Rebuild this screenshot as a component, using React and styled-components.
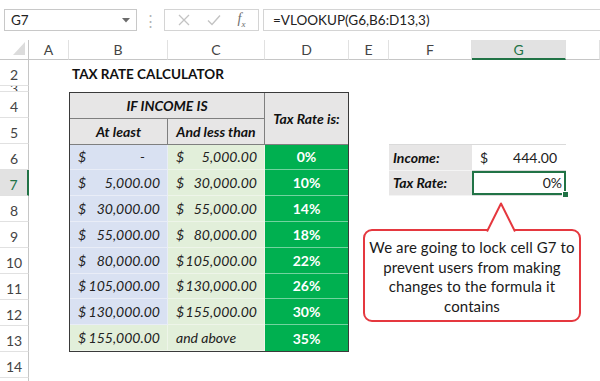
import React from 'react'
import styled, { createGlobalStyle } from 'styled-components'

const GlobalStyle = createGlobalStyle`
  body {
    margin: 0;
    background: #fff;
    font-family: Lato, "Liberation Sans", sans-serif;
    color: #222;
  }
  #root {
    width: 600px;
    height: 381px;
    overflow: hidden;
  }
`

const columns = ['A', 'B', 'C', 'D', 'E', 'F', 'G', '']
const rowLabels = [2, 3, 4, 5, 6, 7, 8, 9, 10, 11, 12, 13, 14, '']

const brackets = [
    { from: null, to: '5,000.00', rate: '0%' },
    { from: '5,000.00', to: '30,000.00', rate: '10%' },
    { from: '30,000.00', to: '55,000.00', rate: '14%' },
    { from: '55,000.00', to: '80,000.00', rate: '18%' },
    { from: '80,000.00', to: '105,000.00', rate: '22%' },
    { from: '105,000.00', to: '130,000.00', rate: '26%' },
    { from: '130,000.00', to: '155,000.00', rate: '30%' },
    { from: '155,000.00', to: null, rate: '35%' },
]

function FormulaIcons() {
    return (
        <ButtonGroup>
            <svg width="12" height="12" viewBox="0 0 12 12">
                <path d="M1 1 L11 11 M11 1 L1 11" stroke="#c3c3c3" strokeWidth="1.3" fill="none" />
            </svg>
            <svg width="14" height="12" viewBox="0 0 14 12">
                <path d="M1 6.5 L5 10.5 L13 1.5" stroke="#c3c3c3" strokeWidth="1.4" fill="none" />
            </svg>
            <Fx>f<sub>x</sub></Fx>
        </ButtonGroup>
    )
}

function App() {
    return (
        <>
            <GlobalStyle />
            <FormulaBar>
                <NameBox>
                    <span>G7</span>
                    <svg width="8" height="5" viewBox="0 0 8 5">
                        <path d="M0 0 L8 0 L4 4.5 Z" fill="#6b6b6b" />
                    </svg>
                </NameBox>
                <Dots>⋮</Dots>
                <FormulaIcons />
                <FormulaInput>=VLOOKUP(G6,B6:D13,3)</FormulaInput>
            </FormulaBar>

            <Sheet>
                <Corner>
                    <svg width="12" height="13" viewBox="0 0 12 13">
                        <path d="M12 0 L12 13 L0 13 Z" fill="#dcdcdc" />
                    </svg>
                </Corner>
                {columns.map((c) => (
                    <ColHeader key={c || 'H'} $active={c === 'G'}>{c}</ColHeader>
                ))}
                {rowLabels.map((n, i) => (
                    <RowHeader key={i} $active={n === 7} $short={n === 3}>{n}</RowHeader>
                ))}

                <Title>TAX RATE CALCULATOR</Title>

                <TaxTable>
                    <HeadCell $span={2}>IF INCOME IS</HeadCell>
                    <HeadCell $tall $last>Tax Rate is:</HeadCell>
                    <HeadCell>At least</HeadCell>
                    <HeadCell>And less than</HeadCell>
                    {brackets.map((b, i) => (
                        <React.Fragment key={b.rate}>
                            <AmountCell $tone={i === brackets.length - 1 ? 'green' : 'blue'}>
                                <span>$</span>
                                {b.from ? <span>{b.from}</span> : <Dash>-</Dash>}
                            </AmountCell>
                            {b.to ? (
                                <AmountCell $tone="green">
                                    <span>$</span>
                                    <span>{b.to}</span>
                                </AmountCell>
                            ) : (
                                <AmountCell $tone="green">
                                    <span>and above</span>
                                </AmountCell>
                            )}
                            <RateCell>{b.rate}</RateCell>
                        </React.Fragment>
                    ))}
                </TaxTable>

                <InputBox>
                    <LabelCell>Income:</LabelCell>
                    <ValueCell>
                        <span>$</span>
                        <span>444.00</span>
                    </ValueCell>
                    <LabelCell>Tax Rate:</LabelCell>
                    <ValueCell $selected>
                        <span />
                        <span>0%</span>
                    </ValueCell>
                </InputBox>

                <Callout>
                    <Pointer width="30" height="30" viewBox="0 0 30 30">
                        <path d="M1 29.5 L15 1.5 L29 29.5" fill="#fff" stroke="#e5383f" strokeWidth="2" strokeLinejoin="round" />
                    </Pointer>
                    We are going to lock cell G7 to<br />
                    prevent users from making<br />
                    changes to the formula it<br />
                    contains
                </Callout>
            </Sheet>
        </>
    )
}

export default App

const FormulaBar = styled.div`
    display: flex;
    align-items: stretch;
    height: 22px;
    padding: 9px 0 0 4px;
    border-top: 1px solid #e6e6e6;
    margin-top: -1px;
`

const NameBox = styled.div`
    width: 133px;
    box-sizing: border-box;
    border: 1px solid #c8c8c8;
    display: flex;
    align-items: center;
    justify-content: space-between;
    padding: 0 6px 0 6px;
    font-size: 13.5px;
    color: #222;
`

const Dots = styled.div`
    width: 27px;
    display: flex;
    align-items: center;
    justify-content: center;
    color: #b4b4b4;
    font-size: 15px;
`

const ButtonGroup = styled.div`
    width: 95px;
    box-sizing: border-box;
    border: 1px solid #d4d4d4;
    display: flex;
    align-items: center;
    justify-content: space-around;
    padding: 0 4px;
`

const Fx = styled.span`
    font-family: "Liberation Serif", serif;
    font-style: italic;
    font-size: 14px;
    color: #6d6d6d;
    sub {
        font-size: 9px;
    }
`

const FormulaInput = styled.div`
    flex: 1;
    margin-left: 4px;
    box-sizing: border-box;
    border: 1px solid #d4d4d4;
    border-right: none;
    display: flex;
    align-items: center;
    padding-left: 9px;
    font-size: 13.5px;
    color: #222;
`

const Sheet = styled.div`
    position: relative;
    margin-top: 9px;
    display: grid;
    grid-template-columns: 29px 40px 99px 97px 84px 40px 83px 94px 1fr;
    grid-template-rows: 20px 26px 6px repeat(12, 26px);
`

const Corner = styled.div`
    grid-column: 1;
    grid-row: 1;
    display: flex;
    align-items: flex-end;
    justify-content: flex-end;
    padding: 0 3px 4px 0;
    border-right: 1px solid #c6c6c6;
    border-bottom: 1px solid #c6c6c6;
`

const ColHeader = styled.div`
    grid-row: 1;
    display: flex;
    align-items: center;
    justify-content: center;
    font-size: 14px;
    color: ${p => p.$active ? '#217346' : '#444'};
    background: ${p => p.$active ? '#e2e2e2' : '#fff'};
    border-right: 1px solid #e1e1e1;
    border-bottom: ${p => p.$active ? '2px solid #217346' : '1px solid #c6c6c6'};
`

const RowHeader = styled.div`
    grid-column: 1;
    display: flex;
    align-items: center;
    justify-content: center;
    overflow: hidden;
    padding-top: ${p => p.$short ? '0' : '4px'};
    box-sizing: border-box;
    font-size: 14px;
    line-height: ${p => p.$short ? '5px' : 'normal'};
    color: ${p => p.$active ? '#217346' : '#444'};
    background: ${p => p.$active ? '#e2e2e2' : '#fff'};
    border-bottom: 1px solid #e1e1e1;
    border-right: ${p => p.$active ? '2px solid #217346' : '1px solid #c6c6c6'};
`

const Title = styled.div`
    grid-column: 3 / span 3;
    grid-row: 2;
    display: flex;
    align-items: center;
    padding: 2px 0 0 3px;
    font-weight: 700;
    font-size: 13.5px;
    color: #111;
`

const TaxTable = styled.div`
    grid-column: 3 / span 3;
    grid-row: 4 / span 10;
    display: grid;
    grid-template-columns: 98px 97px 83px;
    grid-template-rows: repeat(10, 1fr);
    border: 1px solid #3a3a3a;
    font-size: 14px;
    font-style: italic;
`

const HeadCell = styled.div`
    grid-column: ${p => p.$span ? `span ${p.$span}` : 'auto'};
    grid-row: ${p => p.$tall ? 'span 2' : 'auto'};
    display: flex;
    align-items: center;
    justify-content: center;
    background: #e7e6e6;
    font-weight: 700;
    color: #111;
    border-right: ${p => p.$last ? 'none' : '1px solid #7f7f7f'};
    border-bottom: 1px solid #7f7f7f;
`

const AmountCell = styled.div`
    display: flex;
    align-items: center;
    justify-content: space-between;
    padding: 0 7px 0 8px;
    background: ${p => p.$tone === 'green' ? '#e2efda' : '#d9e1f2'};
    border-right: 1px solid ${p => p.$tone === 'green' ? '#eef5e9' : '#e9edf7'};
    border-bottom: 1px solid ${p => p.$tone === 'green' ? '#eef5e9' : '#e9edf7'};
    color: #222;
    white-space: nowrap;
`

const Dash = styled.span`
    margin-right: 15px;
`

const RateCell = styled.div`
    display: flex;
    align-items: center;
    justify-content: center;
    background: #00b050;
    color: #fff;
    font-weight: 700;
    font-style: normal;
    border-bottom: 1px solid rgba(255, 255, 255, 0.45);
    &:last-child {
        border-bottom: none;
    }
`

const InputBox = styled.div`
    grid-column: 7 / span 2;
    grid-row: 6 / span 2;
    display: grid;
    grid-template-columns: 83px 94px;
    grid-template-rows: 1fr 1fr;
    font-size: 14px;
    border-top: 1px solid #dadada;
    border-right: 1px solid #dadada;
`

const LabelCell = styled.div`
    display: flex;
    align-items: center;
    padding-left: 4px;
    background: #e7e6e6;
    font-weight: 700;
    font-style: italic;
    color: #111;
    border-bottom: 1px solid #f4f4f4;
`

const ValueCell = styled.div`
    position: relative;
    display: flex;
    align-items: center;
    justify-content: space-between;
    padding: 0 ${p => p.$selected ? '4px' : '9px'} 0 8px;
    background: #fff;
    color: #222;
    border-bottom: 1px solid #dadada;
    box-shadow: ${p => p.$selected ? 'inset 0 0 0 2px #217346' : 'none'};
    &::after {
        content: '';
        display: ${p => p.$selected ? 'block' : 'none'};
        position: absolute;
        right: -3px;
        bottom: -3px;
        width: 5px;
        height: 5px;
        background: #217346;
        border: 1px solid #fff;
    }
`

const Callout = styled.div`
    position: absolute;
    left: 363px;
    top: 189px;
    width: 218px;
    height: 93px;
    box-sizing: border-box;
    border: 2px solid #e5383f;
    border-radius: 9px;
    background: #fff;
    padding-top: 7px;
    text-align: center;
    font-size: 15px;
    line-height: 19.5px;
    letter-spacing: 0.1px;
    color: #1a1a1a;
    white-space: nowrap;
`

const Pointer = styled.svg`
    position: absolute;
    left: 121px;
    top: -29px;
`
